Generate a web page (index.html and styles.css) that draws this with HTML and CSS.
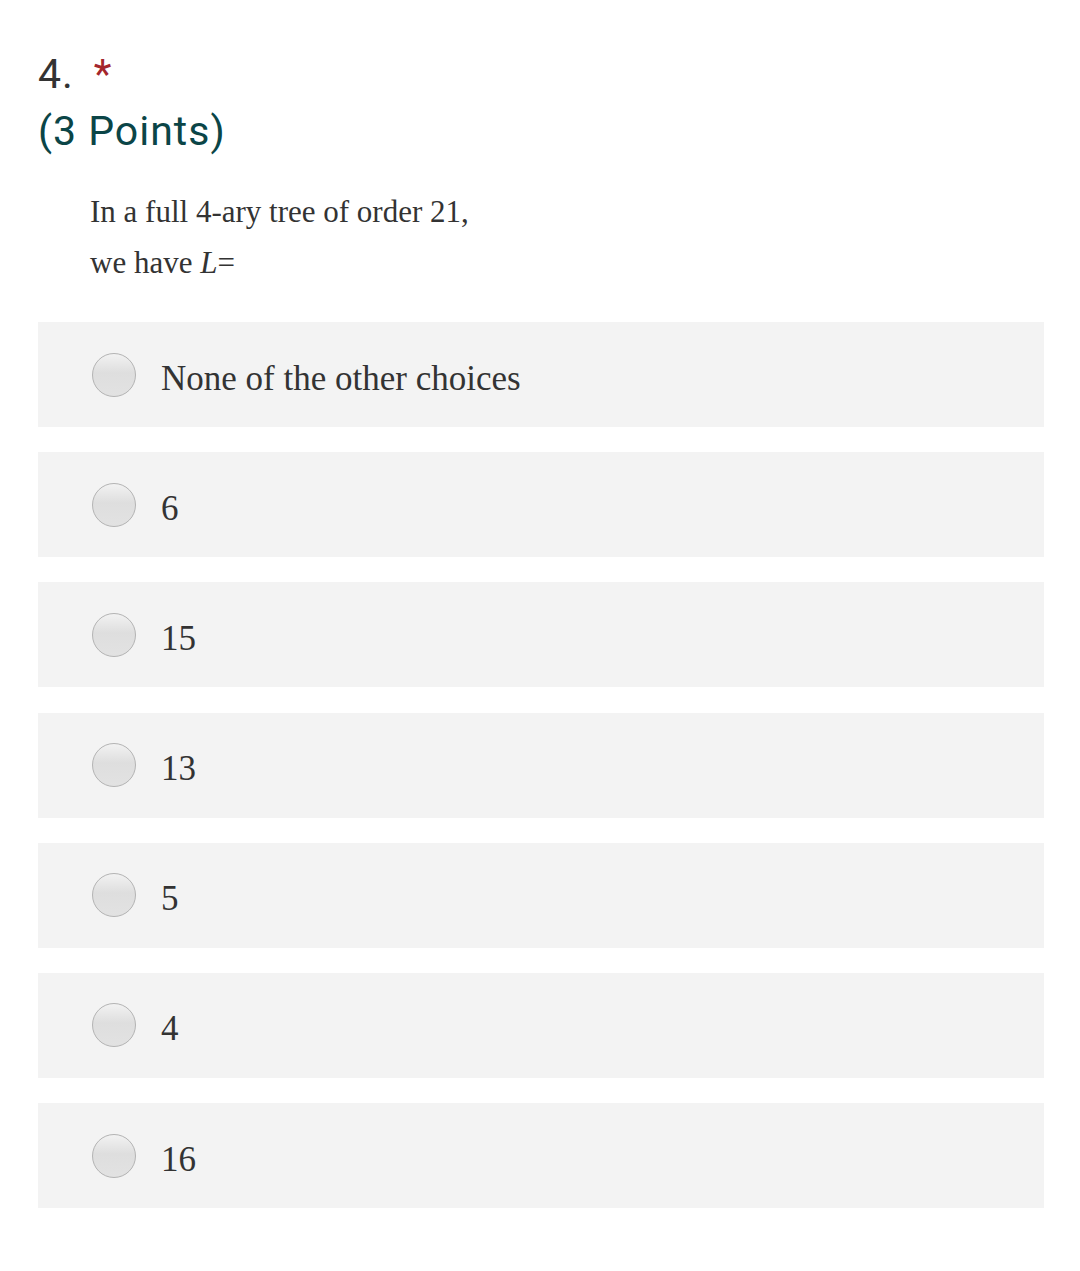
FILE: index.html
```html
<!DOCTYPE html>
<html lang="en">
<head>
    <meta charset="UTF-8">
    <title>Question 4</title>
    <link rel="stylesheet" href="styles.css">
</head>
<body>
<div class="question">
    <div class="title">
        <span class="number">4.</span><span class="required">*</span>
    </div>
    <div class="points">(3 Points)</div>

    <div class="prompt">
        <p>In a full 4-ary tree of order 21,</p>
        <p>we have <i>L</i>=</p>
    </div>

    <div class="choices">
        <label class="choice"><span class="radio"></span><span class="text">None of the other choices</span></label>
        <label class="choice"><span class="radio"></span><span class="text">6</span></label>
        <label class="choice"><span class="radio"></span><span class="text">15</span></label>
        <label class="choice"><span class="radio"></span><span class="text">13</span></label>
        <label class="choice"><span class="radio"></span><span class="text">5</span></label>
        <label class="choice"><span class="radio"></span><span class="text">4</span></label>
        <label class="choice"><span class="radio"></span><span class="text">16</span></label>
    </div>
</div>
</body>
</html>
```

FILE: styles.css
```css
body {
    margin: 0;
    background: #fff;
    font-family: Roboto, "Liberation Sans", sans-serif;
}
.question {
    padding: 46px 36px 40px 38px;
}
.title, .points {
    font-size: 41px;
    line-height: 57px;
    letter-spacing: 1px;
}
.title {
    color: #333;
}
.required {
    color: #a4262c;
    margin-left: 20px;
}
.points {
    color: #0b4547;
}
.prompt {
    margin: 26px 0 0 52px;
    font: 31px/51px "Liberation Serif", "Times New Roman", serif;
    color: #333;
}
.prompt p {
    margin: 0;
}
.choices {
    margin-top: 34px;
    display: flex;
    flex-direction: column;
    gap: 25.2px;
}
.choice {
    display: flex;
    align-items: center;
    height: 105px;
    background: #f3f3f3;
    padding-left: 54px;
}
.radio {
    width: 42px;
    height: 42px;
    border: 1px solid #b3b3b3;
    border-radius: 50%;
    background: linear-gradient(#f2f2f2, #dedede 45%, #e2e2e2);
    flex: none;
}
.text {
    margin: 8px 0 0 25px;
    font: 35px "Liberation Serif", "Times New Roman", serif;
    color: #333;
}
```
